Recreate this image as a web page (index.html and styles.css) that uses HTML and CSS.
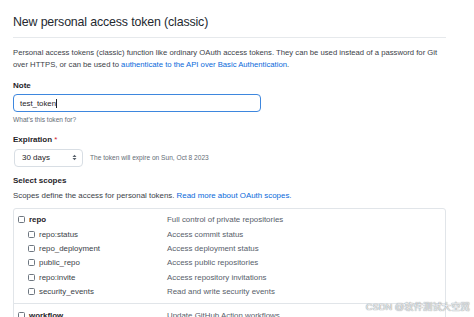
FILE: index.html
```html
<!DOCTYPE html>
<html>
<head>
<meta charset="utf-8">
<link rel="stylesheet" href="styles.css">
</head>
<body>
<div class="page">
  <h1 class="title">New personal access token (classic)</h1>
  <p class="lead">Personal access tokens (classic) function like ordinary OAuth access tokens. They can be used instead of a password for Git over HTTPS, or can be used to <a href="#">authenticate to the API over Basic Authentication</a>.</p>

  <div class="field">
    <label class="label">Note</label>
    <div class="input">test_token<span class="caret"></span></div>
    <div class="hint">What's this token for?</div>
  </div>

  <div class="field">
    <label class="label">Expiration <span class="req">*</span></label>
    <div class="exp-row">
      <div class="select">30 days
        <svg class="updown" width="5" height="7" viewBox="0 0 5 7"><path d="M0.5 3 L2.5 0.8 L4.5 3 Z M0.5 4 L2.5 6.2 L4.5 4 Z" fill="#57606a"/></svg>
      </div>
      <span class="exp-note">The token will expire on Sun, Oct 8 2023</span>
    </div>
  </div>

  <div class="field">
    <label class="label">Select scopes</label>
    <p class="scopes-desc">Scopes define the access for personal tokens. <a href="#">Read more about OAuth scopes.</a></p>
    <div class="scopes">
      <div class="group">
        <div class="row main"><span class="name"><span class="cb"></span>repo</span><span class="desc">Full control of private repositories</span></div>
        <div class="row sub"><span class="name"><span class="cb"></span>repo:status</span><span class="desc">Access commit status</span></div>
        <div class="row sub"><span class="name"><span class="cb"></span>repo_deployment</span><span class="desc">Access deployment status</span></div>
        <div class="row sub"><span class="name"><span class="cb"></span>public_repo</span><span class="desc">Access public repositories</span></div>
        <div class="row sub"><span class="name"><span class="cb"></span>repo:invite</span><span class="desc">Access repository invitations</span></div>
        <div class="row sub"><span class="name"><span class="cb"></span>security_events</span><span class="desc">Read and write security events</span></div>
      </div>
      <div class="group last">
        <div class="row main"><span class="name"><span class="cb"></span>workflow</span><span class="desc">Update GitHub Action workflows</span></div>
      </div>
    </div>
  </div>
</div>
<div class="watermark">CSDN @软件测试大空翼</div>
</body>
</html>
```
FILE: styles.css
```css
html, body {
  margin: 0;
  padding: 0;
  background: #ffffff;
  overflow: hidden;
}
body {
  width: 474px;
  height: 317px;
  position: relative;
  font-family: "Liberation Sans", "Noto Sans CJK SC", sans-serif;
  color: #1f2328;
}
.page {
  width: 433px;
  padding: 13px 0 0 13px;
}
.title {
  margin: 0;
  font-weight: 400;
  font-size: 12.4px;
  letter-spacing: -0.15px;
  line-height: 18px;
  padding-bottom: 6px;
  border-bottom: 1px solid #e6e9ec;
  color: #24292f;
}
.lead {
  margin: 9px 0 0 0;
  font-size: 7.7px;
  line-height: 12px;
  color: #3b4148;
}
a {
  color: #0969da;
  text-decoration: none;
}
.field {
  margin-top: 9px;
}
.field + .field {
  margin-top: 8.5px;
}
.label {
  display: block;
  font-weight: 700;
  font-size: 8px;
  line-height: 12px;
  color: #1f2328;
}
.req {
  color: #d1242f;
  font-weight: 400;
}
.input {
  margin-top: 2px;
  box-sizing: border-box;
  width: 248px;
  height: 18px;
  border: 1.5px solid #3e87de;
  border-radius: 4px;
  padding: 0 0 0 6px;
  font-size: 7.8px;
  line-height: 15px;
  color: #1f2328;
  display: flex;
  align-items: center;
}
.caret {
  display: inline-block;
  width: 1px;
  height: 9px;
  background: #1f2328;
}
.hint {
  margin-top: 3px;
  font-size: 6.6px;
  line-height: 10px;
  color: #656d76;
}
.exp-row {
  margin-top: 3px;
  display: flex;
  align-items: center;
  gap: 7px;
}
.select {
  box-sizing: border-box;
  width: 69px;
  height: 18px;
  margin-left: 1px;
  border: 1px solid #d8dee4;
  border-radius: 4px;
  padding: 0 5px 0 7px;
  display: flex;
  align-items: center;
  justify-content: space-between;
  font-size: 8px;
  background: #ffffff;
}
.exp-note {
  font-size: 6.6px;
  color: #656d76;
}
.scopes-desc {
  margin: 3px 0 0 0;
  font-size: 7.9px;
  line-height: 12px;
  color: #3b4148;
}
.scopes {
  margin-top: 6px;
  border: 1px solid #e1e5e9;
  border-radius: 3px;
}
.group {
  padding: 3.5px 0 4.5px 0;
  border-bottom: 1px solid #e1e5e9;
}
.row {
  display: flex;
  height: 14.4px;
  align-items: center;
  font-size: 7.9px;
}
.name {
  display: flex;
  align-items: center;
  width: 153px;
  padding-left: 4px;
  box-sizing: border-box;
}
.sub .name {
  padding-left: 14px;
  color: #3b4148;
}
.main .name {
  font-weight: 700;
}
.cb {
  display: inline-block;
  box-sizing: border-box;
  width: 7px;
  height: 7px;
  border: 1px solid #6e7781;
  border-radius: 1.5px;
  margin-right: 4px;
  background: #fff;
}
.desc {
  color: #57606a;
}
.watermark {
  position: absolute;
  right: 4px;
  bottom: 4px;
  font-family: "Liberation Sans", "Noto Sans CJK SC", sans-serif;
  font-size: 9.4px;
  line-height: 12px;
  color: #eef0f2;
  text-shadow: 0 0 1px #8e9398, 0 0 1px #8e9398;
}
```
